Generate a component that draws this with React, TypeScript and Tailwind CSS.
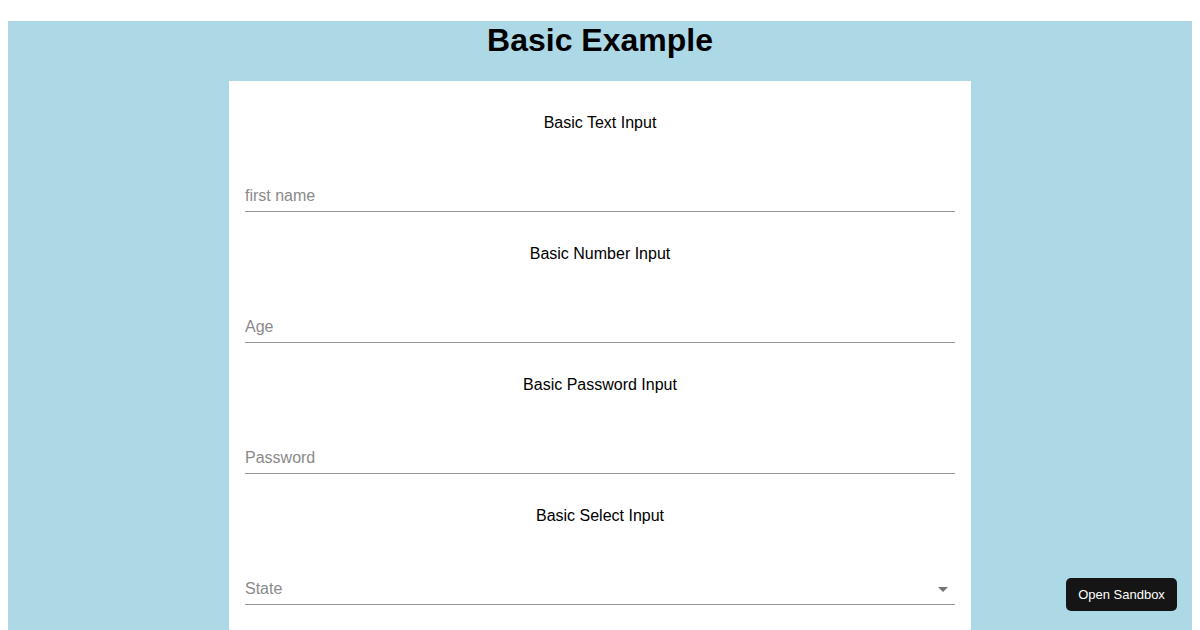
import React from 'react';

const fields = [
  { label: 'Basic Text Input', placeholder: 'first name', type: 'text' },
  { label: 'Basic Number Input', placeholder: 'Age', type: 'number' },
  { label: 'Basic Password Input', placeholder: 'Password', type: 'password' },
];

function FieldSection({ label, children }: { label: string; children: React.ReactNode }) {
  return (
    <div className="mb-8">
      <p className="pt-px text-center text-base leading-[18px] text-black">{label}</p>
      <div className="mt-[51px] border-b border-[#949494]">{children}</div>
    </div>
  );
}

export default function App() {
  return (
    <div className="min-h-screen bg-white px-2 pt-[21px] font-['Liberation_Sans',Arial,sans-serif]">
      <div className="bg-[#add8e6] pb-10">
        <h1 className="mb-[22px] pt-px text-center text-[32px] font-bold leading-[37px] text-black">
          Basic Example
        </h1>

        <div className="mx-auto w-[742px] bg-white px-4 pt-8 pb-8">
          {fields.map((f) => (
            <FieldSection key={f.label} label={f.label}>
              <input
                type={f.type}
                placeholder={f.placeholder}
                className="block h-7 w-full bg-transparent pt-[3px] pb-[6px] text-base leading-[19px] text-black outline-none placeholder:text-[#8a8a8a]"
              />
            </FieldSection>
          ))}

          <FieldSection label="Basic Select Input">
            <div className="flex h-7 items-center justify-between pt-[3px] pb-[6px]">
              <span className="text-base leading-[19px] text-[#8a8a8a]">State</span>
              <svg width="10" height="5" viewBox="0 0 10 5" className="mr-[7px] mt-[2px]">
                <path d="M0 0h10L5 5z" fill="#757575" />
              </svg>
            </div>
          </FieldSection>
        </div>
      </div>

      {/* sandbox link */}
      <button className="fixed right-[23px] bottom-[19px] h-[33px] w-[111px] rounded-[5px] bg-[#151515] text-[13px] text-white">
        Open Sandbox
      </button>
    </div>
  );
}
